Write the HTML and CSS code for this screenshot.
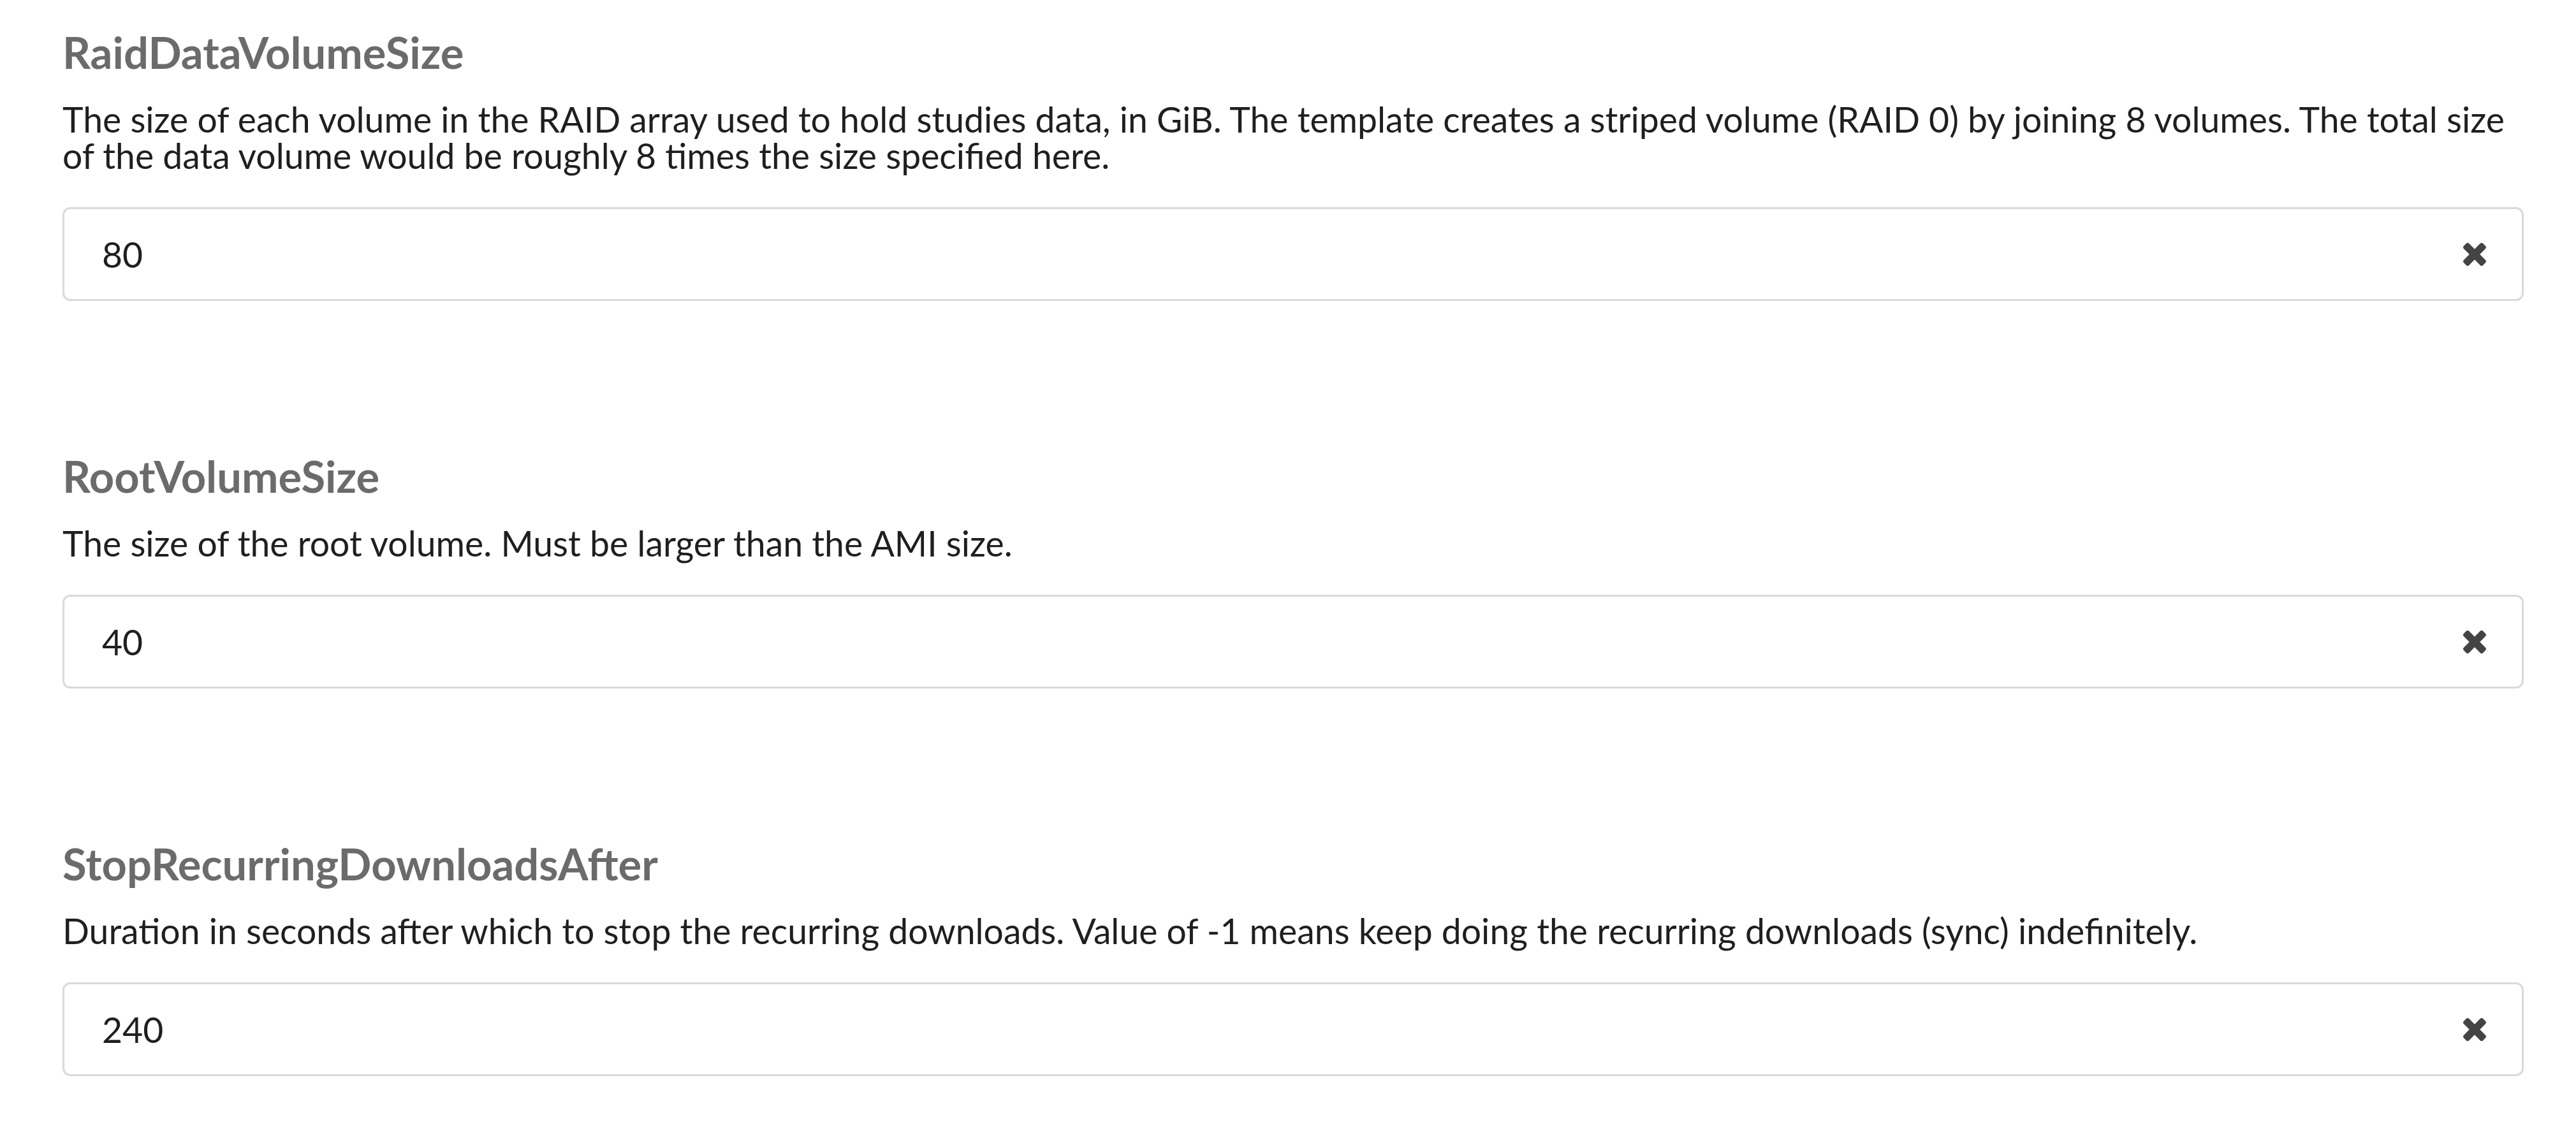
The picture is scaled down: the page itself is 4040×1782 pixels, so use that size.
FILE: index.html
```html
<!DOCTYPE html>
<html lang="en">
<head>
<meta charset="utf-8">
<title>Parameters</title>
<link rel="stylesheet" href="styles.css">
</head>
<body>
<div class="form">
  <div class="field">
    <div class="field-title">RaidDataVolumeSize</div>
    <div class="field-desc">The size of each volume in the RAID array used to hold studies data, in GiB. The template creates a striped volume (RAID 0) by joining 8 volumes. The total size of the data volume would be roughly 8 times the size specified here.</div>
    <div class="field-input">
      <span class="field-value">80</span>
      <svg class="clear-icon" viewBox="110 366 1188 1188" aria-hidden="true"><path d="M1298 1322q0 40-28 68l-136 136q-28 28-68 28t-68-28l-294-294-294 294q-28 28-68 28t-68-28l-136-136q-28-28-28-68t28-68l294-294-294-294q-28-28-28-68t28-68l136-136q28-28 68-28t68 28l294 294 294-294q28-28 68-28t68 28l136 136q28 28 28 68t-28 68l-294 294 294 294q28 28 28 68z"/></svg>
    </div>
  </div>
  <div class="field">
    <div class="field-title">RootVolumeSize</div>
    <div class="field-desc">The size of the root volume. Must be larger than the AMI size.</div>
    <div class="field-input">
      <span class="field-value">40</span>
      <svg class="clear-icon" viewBox="110 366 1188 1188" aria-hidden="true"><path d="M1298 1322q0 40-28 68l-136 136q-28 28-68 28t-68-28l-294-294-294 294q-28 28-68 28t-68-28l-136-136q-28-28-28-68t28-68l294-294-294-294q-28-28-28-68t28-68l136-136q28-28 68-28t68 28l294 294 294-294q28-28 68-28t68 28l136 136q28 28 28 68t-28 68l-294 294 294 294q28 28 28 68z"/></svg>
    </div>
  </div>
  <div class="field">
    <div class="field-title">StopRecurringDownloadsAfter</div>
    <div class="field-desc">Duration in seconds after which to stop the recurring downloads. Value of -1 means keep doing the recurring downloads (sync) indefinitely.</div>
    <div class="field-input">
      <span class="field-value">240</span>
      <svg class="clear-icon" viewBox="110 366 1188 1188" aria-hidden="true"><path d="M1298 1322q0 40-28 68l-136 136q-28 28-68 28t-68-28l-294-294-294 294q-28 28-68 28t-68-28l-136-136q-28-28-28-68t28-68l294-294-294-294q-28-28-28-68t28-68l136-136q28-28 68-28t68 28l294 294 294-294q28-28 68-28t68 28l136 136q28 28 28 68t-28 68l-294 294 294 294q28 28 28 68z"/></svg>
    </div>
  </div>
</div>
</body>
</html>
```
FILE: styles.css
```css
html, body {
  margin: 0;
  padding: 0;
  background: #ffffff;
}

body {
  font-family: Lato, "Open Sans", "Liberation Sans", sans-serif;
  color: #1f1f1f;
}

.form {
  padding: 42px 82px 0 98px;
  display: flex;
  flex-direction: column;
  gap: 235px;
}

.field {
  display: flex;
  flex-direction: column;
}

.field-title {
  font-size: 68.7px;
  line-height: 80px;
  font-weight: 700;
  color: #6b6b6b;
}

.field-desc {
  margin-top: 36px;
  font-size: 55.3px;
  line-height: 57px;
  color: #1f1f1f;
}

.field-input {
  margin-top: 53px;
  height: 147px;
  box-sizing: border-box;
  border: 3px solid #dadada;
  border-radius: 12px;
  display: flex;
  align-items: center;
  justify-content: space-between;
  padding: 0 56px 0 59px;
}

.field-value {
  font-size: 55.3px;
  color: #1f1f1f;
}

.clear-icon {
  width: 36px;
  height: 36px;
  fill: #444444;
}
```
